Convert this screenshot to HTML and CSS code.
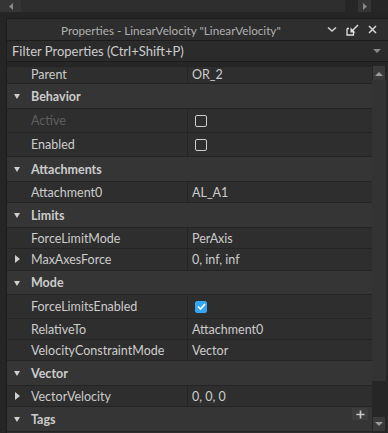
FILE: index.html
```html
<!DOCTYPE html>
<html>
<head>
<meta charset="utf-8">
<link rel="stylesheet" href="styles.css">
</head>
<body>
<div class="app">
  <div class="hscroll">
    <div class="hbtn"><svg width="6" height="7" viewBox="0 0 6 7"><path d="M5 0 L1 3.5 L5 7Z" fill="#8a8a8a"/></svg></div>
    <div class="htrack"></div>
    <div class="hdark"></div>
    <div class="hbtn"><svg width="6" height="7" viewBox="0 0 6 7"><path d="M1 0 L5 3.5 L1 7Z" fill="#8a8a8a"/></svg></div>
    <div class="hend"></div>
  </div>
  <div class="panel">
    <div class="titlebar">
      <div class="title">Properties - LinearVelocity "LinearVelocity"</div>
      <div class="ticons">
        <svg width="10" height="7" viewBox="0 0 10 7"><path d="M1 1.5 L5 5 L9 1.5" fill="none" stroke="#d0d0d0" stroke-width="1.6"/></svg>
        <svg width="13" height="12" viewBox="0 0 13 12"><path d="M1 4.5 V11 H7.5 V8" fill="none" stroke="#e0e0e0" stroke-width="1.3"/><path d="M1 4.5 H3" fill="none" stroke="#e0e0e0" stroke-width="1.3"/><path d="M12 1 L6 7" stroke="#e0e0e0" stroke-width="1.5"/><path d="M4.5 3.5 V8.5 H9.5Z" fill="#e0e0e0"/></svg>
        <svg width="9" height="9" viewBox="0 0 9 9"><path d="M1 1 L8 8 M8 1 L1 8" stroke="#d8d8d8" stroke-width="1.5"/></svg>
      </div>
    </div>
    <div class="filter">
      <span>Filter Properties (Ctrl+Shift+P)</span>
      <svg width="8" height="5" viewBox="0 0 8 5"><path d="M0 0 H8 L4 4Z" fill="#8a8a8a"/></svg>
    </div>
    <div class="content">
      <div class="list">
        <div class="row partial"><div class="name">Parent</div><div class="val">OR_2</div></div>
        <div class="head"><span class="tri-down"></span>Behavior</div>
        <div class="row tall"><div class="name dim">Active</div><div class="val"><span class="cb"></span></div></div>
        <div class="row tall"><div class="name">Enabled</div><div class="val"><span class="cb"></span></div></div>
        <div class="head"><span class="tri-down"></span>Attachments</div>
        <div class="row"><div class="name">Attachment0</div><div class="val">AL_A1</div></div>
        <div class="head"><span class="tri-down"></span>Limits</div>
        <div class="row"><div class="name">ForceLimitMode</div><div class="val">PerAxis</div></div>
        <div class="row x22"><div class="name"><span class="tri-right"></span>MaxAxesForce</div><div class="val">0, inf, inf</div></div>
        <div class="head short"><span class="tri-down"></span>Mode</div>
        <div class="row tall"><div class="name">ForceLimitsEnabled</div><div class="val"><span class="cb on"><svg width="9" height="7" viewBox="0 0 9 7"><path d="M1 3.5 L3.5 6 L8 1" fill="none" stroke="#fff" stroke-width="1.6"/></svg></span></div></div>
        <div class="row"><div class="name">RelativeTo</div><div class="val">Attachment0</div></div>
        <div class="row"><div class="name">VelocityConstraintMode</div><div class="val">Vector</div></div>
        <div class="head"><span class="tri-down"></span>Vector</div>
        <div class="row"><div class="name"><span class="tri-right"></span>VectorVelocity</div><div class="val">0, 0, 0</div></div>
        <div class="head tags"><span class="tri-down"></span>Tags<span class="plus"><svg width="11" height="11" viewBox="0 0 11 11"><path d="M5.5 0.5 V10.5 M0.5 5.5 H10.5" stroke="#c8c8c8" stroke-width="2"/></svg></span></div>
      </div>
      <div class="vscroll">
        <div class="vbtn"><svg width="8" height="5" viewBox="0 0 8 5"><path d="M0 5 H8 L4 1Z" fill="#9a9a9a"/></svg></div>
        <div class="vthumb"></div>
        <div class="vtrack"></div>
        <div class="vbtn"><svg width="8" height="5" viewBox="0 0 8 5"><path d="M0 0 H8 L4 4Z" fill="#9a9a9a"/></svg></div>
      </div>
    </div>
  </div>
</div>
</body>
</html>
```
FILE: styles.css
```css
* { box-sizing: border-box; }
html, body { margin: 0; padding: 0; }
body {
  width: 388px;
  height: 433px;
  overflow: hidden;
  background: #252525;
  font-family: Lato, "Noto Sans", sans-serif;
  font-size: 12.5px;
  color: #cccccc;
}
.app { display: flex; flex-direction: column; height: 433px; }
.hscroll {
  height: 12px;
  display: flex;
  background: #2e2e2e;
}
.hbtn {
  width: 13px;
  display: flex;
  align-items: center;
  justify-content: center;
  background: #353535;
}
.hscroll .hbtn:first-child { width: 21px; }
.htrack { flex: 1; background: #2e2e2e; }
.hdark { width: 13px; background: #262626; }
.hend { width: 17px; background: #262626; }

.panel {
  margin-top: 6px;
  margin-left: 6px;
  flex: 1;
  display: flex;
  flex-direction: column;
  border-left: 1px solid #1c1c1c;
  background: #2e2e2e;
  min-height: 0;
}
.titlebar {
  height: 22px;
  flex: none;
  display: flex;
  align-items: center;
  background: #2e2e2e;
  border-top: 1px solid #1e1e1e;
}
.title {
  flex: 1;
  padding-left: 54px;
  color: #b0b0b0;
  font-size: 11.7px;
}
.ticons {
  display: flex;
  align-items: center;
  gap: 9px;
  padding-right: 11px;
}
.filter {
  height: 22px;
  flex: none;
  display: flex;
  align-items: center;
  justify-content: space-between;
  padding: 0 7px 0 5px;
  background: #2b2b2b;
  border-top: 1px solid #1c1c1c;
  border-bottom: 1px solid #1c1c1c;
  color: #cccccc;
  font-size: 13px;
}
.content {
  flex: 1;
  display: flex;
  min-height: 0;
  padding-top: 4px;
  background: #262626;
}
.list {
  flex: 1;
  display: flex;
  flex-direction: column;
  background: #2e2e2e;
  overflow: hidden;
}
.row {
  height: 21px;
  flex: none;
  display: flex;
  border-bottom: 1px solid #242424;
}
.row.partial { height: 18px; border-top: 1px solid #242424; }
.row.partial .name, .row.partial .val { padding-bottom: 2px; }
.row.tall { height: 24px; }
.row.x22 { height: 22px; }
.name {
  width: 181px;
  flex: none;
  display: flex;
  align-items: center;
  padding-left: 24px;
  border-right: 1px solid #242424;
  position: relative;
}
.name.dim { color: #5e5e5e; }
.val {
  flex: 1;
  display: flex;
  align-items: center;
  padding-left: 4px;
}
.head {
  height: 25px;
  flex: none;
  display: flex;
  align-items: center;
  padding-left: 24px;
  background: #353535;
  border-bottom: 1px solid #242424;
  font-weight: bold;
  color: #cccccc;
  position: relative;
}
.head.short { height: 24px; }
.tri-down {
  position: absolute;
  left: 7px;
  top: 10px;
  width: 0; height: 0;
  border-left: 3.5px solid transparent;
  border-right: 3.5px solid transparent;
  border-top: 5px solid #d0d0d0;
}
.tri-right {
  position: absolute;
  left: 8px;
  top: 6px;
  width: 0; height: 0;
  border-top: 4px solid transparent;
  border-bottom: 4px solid transparent;
  border-left: 5px solid #d0d0d0;
}
.cb {
  width: 12px;
  height: 12px;
  margin-left: 3px;
  border: 1.5px solid #d0d0d0;
  border-radius: 2px;
  display: inline-flex;
  align-items: center;
  justify-content: center;
}
.cb.on {
  background: #35a5f5;
  border-color: #35a5f5;
}
.plus {
  position: absolute;
  right: 4px;
  top: 1px;
  width: 16px;
  height: 12px;
  background: #3d3d3d;
  display: flex;
  align-items: center;
  justify-content: center;
}
.plus svg { width: 9px; height: 9px; }
.vscroll {
  width: 16px;
  flex: none;
  display: flex;
  flex-direction: column;
  background: #262626;
  padding: 0 3px 0 1px;
}
.vbtn {
  height: 14px;
  flex: none;
  background: #3a3a3a;
  display: flex;
  align-items: center;
  justify-content: center;
}
.vthumb { height: 301px; background: #333333; margin: 0 -1px; flex: none; }
.vtrack { flex: 1; }
.vscroll .vbtn:last-child { margin-bottom: 2px; }
```
